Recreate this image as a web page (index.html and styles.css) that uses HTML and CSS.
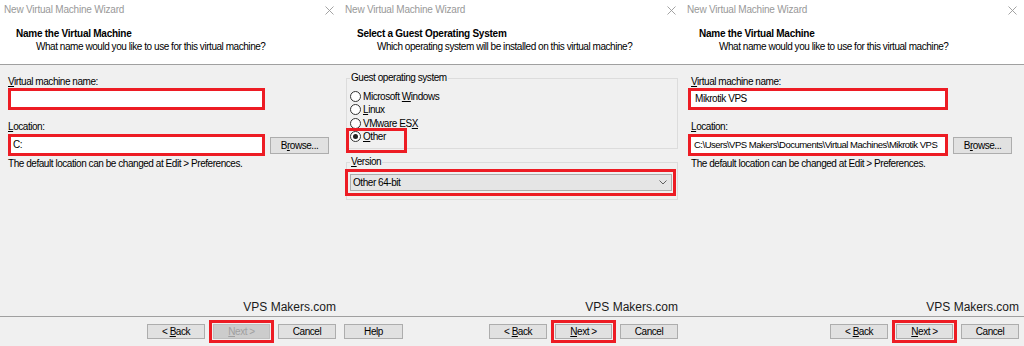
FILE: index.html
```html
<!DOCTYPE html>
<html lang="en">
<head>
<meta charset="utf-8">
<title>New Virtual Machine Wizard</title>
<link rel="stylesheet" href="styles.css">
</head>
<body>
<div class="wizards">
  <section class="win">
    <div class="titlebar">
      <span>New Virtual Machine Wizard</span>
      <svg class="close" viewBox="0 0 9 9"><path d="M0.5 0.5L8.5 8.5M8.5 0.5L0.5 8.5" stroke="#999" stroke-width="0.9" fill="none"/></svg>
    </div>
    <header class="head">
      <h1>Name the Virtual Machine</h1>
      <p>What name would you like to use for this virtual machine?</p>
    </header>
    <main class="body">
      <div class="lbl"><u>V</u>irtual machine name:</div>
      <div class="field"></div>
      <div class="lbl lbl-loc"><u>L</u>ocation:</div>
      <div class="loc-row">
        <div class="field">C:</div>
        <button class="btn btn-browse">B<u>r</u>owse...</button>
      </div>
      <p class="hint">The default location can be changed at Edit &gt; Preferences.</p>
      <div class="brand">VPS Makers.com</div>
    </main>
    <footer class="foot">
      <button class="btn">&lt; <u>B</u>ack</button>
      <span class="hl-btn"><button class="btn" disabled><u>N</u>ext &gt;</button></span>
      <button class="btn">Cancel</button>
    </footer>
  </section>

  <section class="win">
    <div class="titlebar">
      <span>New Virtual Machine Wizard</span>
      <svg class="close" viewBox="0 0 9 9"><path d="M0.5 0.5L8.5 8.5M8.5 0.5L0.5 8.5" stroke="#999" stroke-width="0.9" fill="none"/></svg>
    </div>
    <header class="head">
      <h1>Select a Guest Operating System</h1>
      <p>Which operating system will be installed on this virtual machine?</p>
    </header>
    <main class="body body-os">
      <fieldset class="grp">
        <legend>Guest operating system</legend>
        <div class="radio"><span class="dot"></span><span>Microsoft <u>W</u>indows</span></div>
        <div class="radio"><span class="dot"></span><span><u>L</u>inux</span></div>
        <div class="radio"><span class="dot"></span><span>VMware ES<u>X</u></span></div>
        <div class="radio mark"><span class="dot on"></span><span><u>O</u>ther</span></div>
      </fieldset>
      <fieldset class="grp ver">
        <legend><u>V</u>ersion</legend>
        <div class="sel-hl">
          <div class="select">
            <span>Other 64-bit</span>
            <svg class="chev" viewBox="0 0 8 5"><path d="M0.5 0.5L4 4L7.5 0.5" stroke="#606060" stroke-width="1" fill="none"/></svg>
          </div>
        </div>
      </fieldset>
      <div class="brand brand-os">VPS Makers.com</div>
    </main>
    <footer class="foot">
      <button class="btn btn-help">Help</button>
      <button class="btn">&lt; <u>B</u>ack</button>
      <span class="hl-btn"><button class="btn"><u>N</u>ext &gt;</button></span>
      <button class="btn">Cancel</button>
    </footer>
  </section>

  <section class="win">
    <div class="titlebar">
      <span>New Virtual Machine Wizard</span>
      <svg class="close" viewBox="0 0 9 9"><path d="M0.5 0.5L8.5 8.5M8.5 0.5L0.5 8.5" stroke="#999" stroke-width="0.9" fill="none"/></svg>
    </div>
    <header class="head">
      <h1>Name the Virtual Machine</h1>
      <p>What name would you like to use for this virtual machine?</p>
    </header>
    <main class="body">
      <div class="lbl"><u>V</u>irtual machine name:</div>
      <div class="field field-wide">Mikrotik VPS</div>
      <div class="lbl lbl-loc"><u>L</u>ocation:</div>
      <div class="loc-row">
        <div class="field field-wide field-path">C:\Users\VPS Makers\Documents\Virtual Machines\Mikrotik VPS</div>
        <button class="btn btn-browse">B<u>r</u>owse...</button>
      </div>
      <p class="hint">The default location can be changed at Edit &gt; Preferences.</p>
      <div class="brand">VPS Makers.com</div>
    </main>
    <footer class="foot">
      <button class="btn">&lt; <u>B</u>ack</button>
      <span class="hl-btn"><button class="btn"><u>N</u>ext &gt;</button></span>
      <button class="btn">Cancel</button>
    </footer>
  </section>
</div>
</body>
</html>
```
FILE: styles.css
```css
* { box-sizing: border-box; }
html, body { margin: 0; padding: 0; }
body {
  width: 1024px;
  height: 346px;
  overflow: hidden;
  background: #f0f0f0;
  font-family: "Liberation Sans", Arial, sans-serif;
  font-size: 10px;
  letter-spacing: -0.45px;
  color: #000;
}
.wizards {
  display: grid;
  grid-template-columns: 341px 342px 341px;
  height: 346px;
}
.win {
  display: flex;
  flex-direction: column;
  height: 346px;
  min-width: 0;
  background: #f0f0f0;
}
.titlebar {
  height: 22px;
  background: #fff;
  display: flex;
  align-items: center;
  justify-content: space-between;
  padding: 0 7px 2px 4px;
  color: #999;
  letter-spacing: -0.2px;
  line-height: 12px;
}
.close { width: 9px; height: 9px; display: block; }
.head {
  background: #fff;
  height: 43px;
  padding: 6px 0 0 16px;
  border-bottom: 1px solid #a0a0a0;
}
.head h1 {
  margin: 0;
  font-size: 10px;
  font-weight: bold;
  line-height: 12px;
  letter-spacing: -0.25px;
}
.head p {
  margin: 1px 0 0 20px;
  line-height: 12px;
}
.body {
  flex: 1;
  display: flex;
  flex-direction: column;
  align-items: flex-start;
  padding: 11px 0 2px 8px;
  min-height: 0;
}
.lbl { line-height: 12px; }
.lbl-loc { margin-top: 11px; }
.field {
  height: 22px;
  width: 257px;
  border: 3px solid #ed1c24;
  background: #fff;
  padding: 0 2px;
  line-height: 16px;
  white-space: nowrap;
  overflow: hidden;
}
.field-wide { margin-left: -3px; width: 260px; padding-left: 4px; }
.field-path { font-size: 9.5px; letter-spacing: -0.5px; padding-left: 3px; padding-right: 0; }
.loc-row {
  display: flex;
  align-items: center;
  gap: 5px;
  margin-top: 1px;
}
.hint { margin: 2px 0 0; line-height: 12px; }
.brand {
  margin-top: auto;
  align-self: flex-end;
  padding-right: 5px;
  font-size: 12px;
  letter-spacing: 0;
  line-height: 14px;
  color: #1a1a1a;
}
.btn {
  font: inherit;
  letter-spacing: inherit;
  color: #000;
  background: #e1e1e1;
  border: 1px solid #adadad;
  border-radius: 0;
  height: 15px;
  width: 58px;
  padding: 0;
  line-height: 13px;
  text-align: center;
}
.btn:disabled {
  color: #a0a0a0;
  background: #cccccc;
  border-color: #bfbfbf;
}
.btn-browse { width: 59px; height: 17px; line-height: 15px; }
.btn-help { width: 59px; margin-right: auto; }
.foot {
  height: 30px;
  flex: none;
  border-top: 1px solid #a0a0a0;
  display: flex;
  align-items: center;
  justify-content: flex-end;
  gap: 4px;
  padding: 0 5px 0 3px;
}
.hl-btn {
  display: flex;
  border: 3px solid #ed1c24;
  padding: 1px;
}
.hl-btn .btn { width: 57px; }

/* OS panel */
.body-os {
  padding: 7px 5px 2px 5px;
  align-items: stretch;
}
.grp {
  margin: 0;
  border: 1px solid #dcdcdc;
  padding: 6px 3px 5px 3px;
  min-width: 0;
}
.grp legend {
  padding: 0 1px;
  line-height: 12px;
}
.radio {
  display: flex;
  align-items: center;
  height: 13.3px;
  gap: 2px;
}
.dot {
  width: 11px;
  height: 11px;
  border: 1px solid #333;
  border-radius: 50%;
  background: #fff;
  flex: none;
  display: flex;
  align-items: center;
  justify-content: center;
}
.dot.on::after {
  content: "";
  width: 5px;
  height: 5px;
  border-radius: 50%;
  background: #222;
}
.mark { position: relative; }
.mark::after {
  content: "";
  position: absolute;
  left: -4px;
  top: -2px;
  width: 55px;
  height: 19px;
  border: 3px solid #ed1c24;
}
.ver {
  margin-top: 7px;
  padding: 1px 3px 3px 3px;
}
.sel-hl {
  border: 3px solid #ed1c24;
  padding: 2px 1px 2px 2px;
  margin: 0 -2px 0 -5px;
}
.select {
  height: 17px;
  background: #e5e5e5;
  border: 1px solid #adadad;
  display: flex;
  align-items: center;
  justify-content: space-between;
  padding: 0 4px 0 2px;
}
.chev { width: 8px; height: 5px; display: block; }
.brand-os { padding-right: 0; }
```
